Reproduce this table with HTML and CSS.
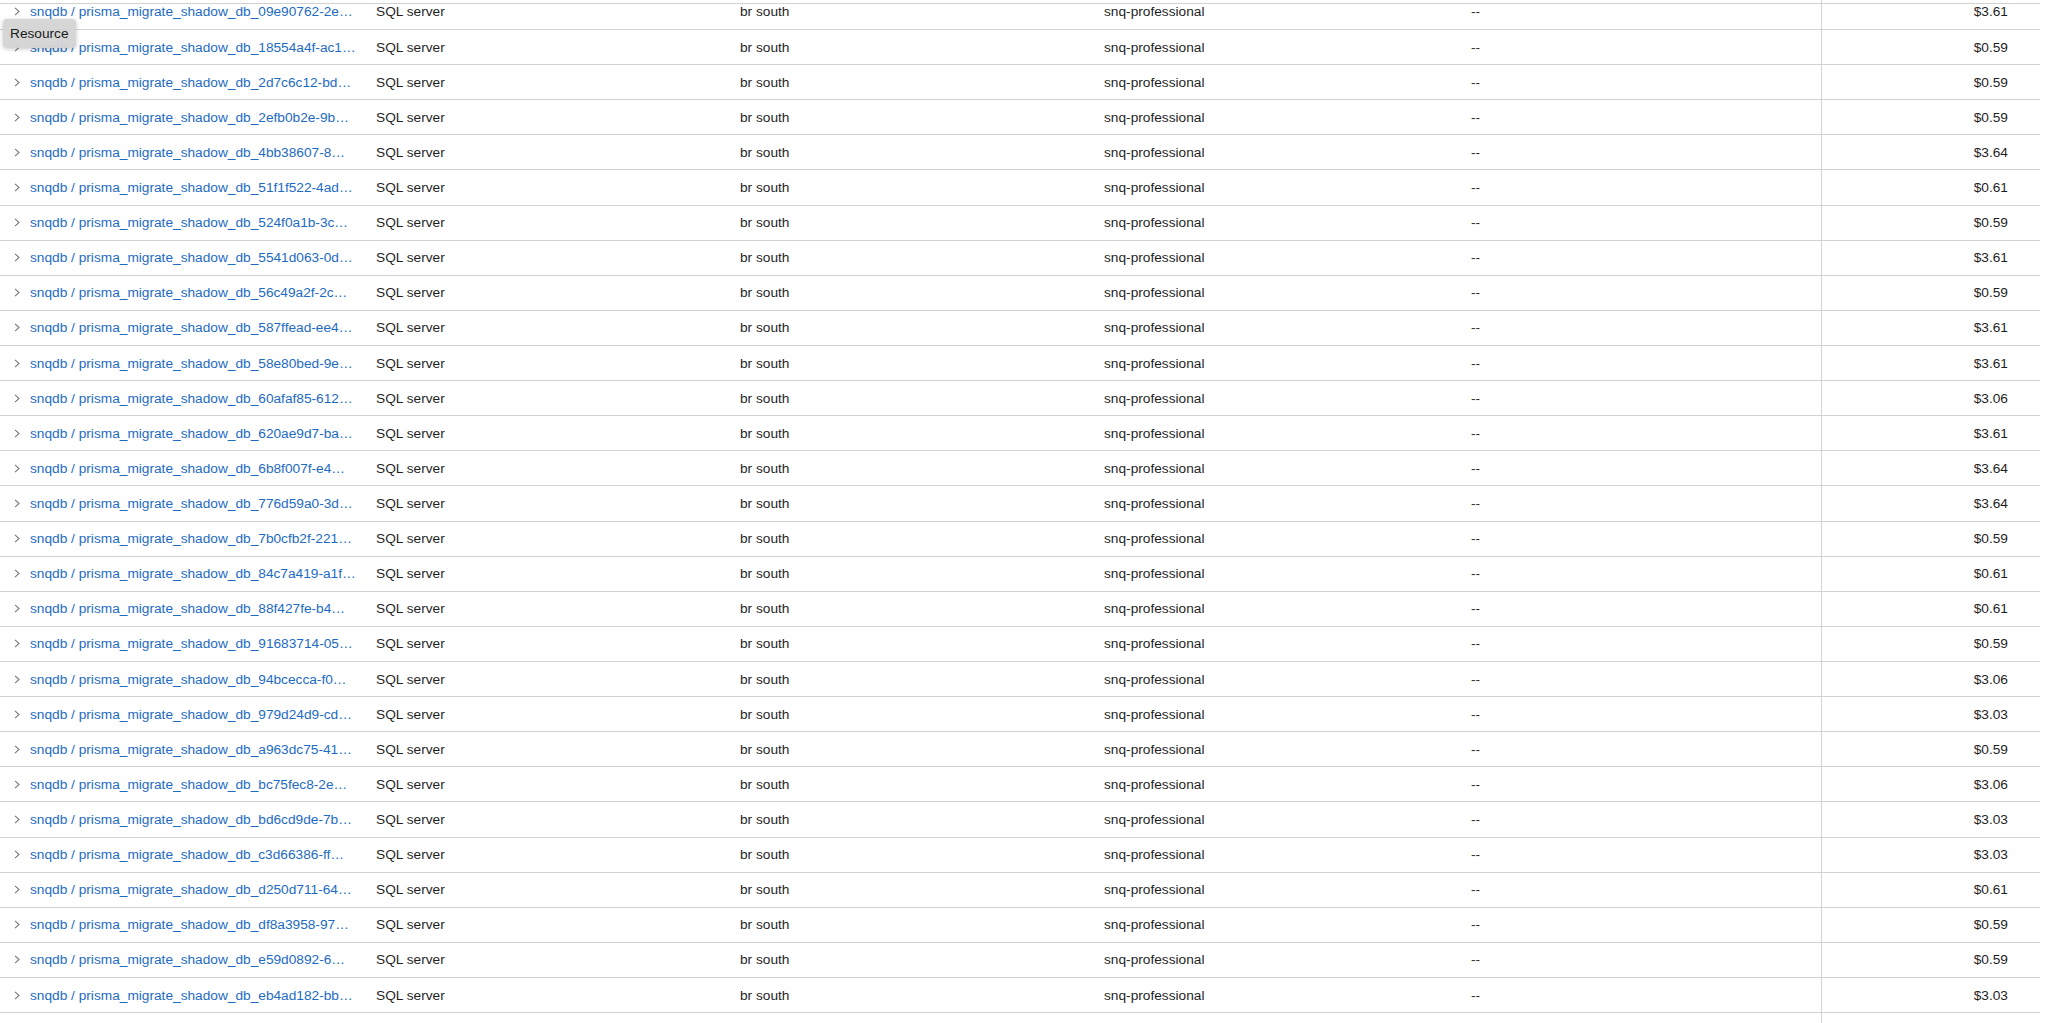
FILE: index.html
```html
<!DOCTYPE html>
<html lang="en">
<head>
<meta charset="utf-8">
<title>Resources</title>
<link rel="stylesheet" href="styles.css">
</head>
<body>
<div class="viewport">
  <div class="sticky-edge"></div>
  <div class="tooltip">Resource</div>
  <div class="table">
    <div class="row"><span class="chev"><svg width="6" height="9" viewBox="0 0 6 9"><path d="M1 0.8 L5 4.5 L1 8.2" fill="none" stroke="#7a7a7a" stroke-width="1.1"/></svg></span><a class="name">snqdb / prisma_migrate_shadow_db_09e90762-2e…</a><span>SQL server</span><span>br south</span><span>snq-professional</span><span class="dash">--</span><span class="price">$3.61</span></div>
    <div class="row"><span class="chev"><svg width="6" height="9" viewBox="0 0 6 9"><path d="M1 0.8 L5 4.5 L1 8.2" fill="none" stroke="#7a7a7a" stroke-width="1.1"/></svg></span><a class="name">snqdb / prisma_migrate_shadow_db_18554a4f-ac1…</a><span>SQL server</span><span>br south</span><span>snq-professional</span><span class="dash">--</span><span class="price">$0.59</span></div>
    <div class="row"><span class="chev"><svg width="6" height="9" viewBox="0 0 6 9"><path d="M1 0.8 L5 4.5 L1 8.2" fill="none" stroke="#7a7a7a" stroke-width="1.1"/></svg></span><a class="name">snqdb / prisma_migrate_shadow_db_2d7c6c12-bd…</a><span>SQL server</span><span>br south</span><span>snq-professional</span><span class="dash">--</span><span class="price">$0.59</span></div>
    <div class="row"><span class="chev"><svg width="6" height="9" viewBox="0 0 6 9"><path d="M1 0.8 L5 4.5 L1 8.2" fill="none" stroke="#7a7a7a" stroke-width="1.1"/></svg></span><a class="name">snqdb / prisma_migrate_shadow_db_2efb0b2e-9b…</a><span>SQL server</span><span>br south</span><span>snq-professional</span><span class="dash">--</span><span class="price">$0.59</span></div>
    <div class="row"><span class="chev"><svg width="6" height="9" viewBox="0 0 6 9"><path d="M1 0.8 L5 4.5 L1 8.2" fill="none" stroke="#7a7a7a" stroke-width="1.1"/></svg></span><a class="name">snqdb / prisma_migrate_shadow_db_4bb38607-8…</a><span>SQL server</span><span>br south</span><span>snq-professional</span><span class="dash">--</span><span class="price">$3.64</span></div>
    <div class="row"><span class="chev"><svg width="6" height="9" viewBox="0 0 6 9"><path d="M1 0.8 L5 4.5 L1 8.2" fill="none" stroke="#7a7a7a" stroke-width="1.1"/></svg></span><a class="name">snqdb / prisma_migrate_shadow_db_51f1f522-4ad…</a><span>SQL server</span><span>br south</span><span>snq-professional</span><span class="dash">--</span><span class="price">$0.61</span></div>
    <div class="row"><span class="chev"><svg width="6" height="9" viewBox="0 0 6 9"><path d="M1 0.8 L5 4.5 L1 8.2" fill="none" stroke="#7a7a7a" stroke-width="1.1"/></svg></span><a class="name">snqdb / prisma_migrate_shadow_db_524f0a1b-3c…</a><span>SQL server</span><span>br south</span><span>snq-professional</span><span class="dash">--</span><span class="price">$0.59</span></div>
    <div class="row"><span class="chev"><svg width="6" height="9" viewBox="0 0 6 9"><path d="M1 0.8 L5 4.5 L1 8.2" fill="none" stroke="#7a7a7a" stroke-width="1.1"/></svg></span><a class="name">snqdb / prisma_migrate_shadow_db_5541d063-0d…</a><span>SQL server</span><span>br south</span><span>snq-professional</span><span class="dash">--</span><span class="price">$3.61</span></div>
    <div class="row"><span class="chev"><svg width="6" height="9" viewBox="0 0 6 9"><path d="M1 0.8 L5 4.5 L1 8.2" fill="none" stroke="#7a7a7a" stroke-width="1.1"/></svg></span><a class="name">snqdb / prisma_migrate_shadow_db_56c49a2f-2c…</a><span>SQL server</span><span>br south</span><span>snq-professional</span><span class="dash">--</span><span class="price">$0.59</span></div>
    <div class="row"><span class="chev"><svg width="6" height="9" viewBox="0 0 6 9"><path d="M1 0.8 L5 4.5 L1 8.2" fill="none" stroke="#7a7a7a" stroke-width="1.1"/></svg></span><a class="name">snqdb / prisma_migrate_shadow_db_587ffead-ee4…</a><span>SQL server</span><span>br south</span><span>snq-professional</span><span class="dash">--</span><span class="price">$3.61</span></div>
    <div class="row"><span class="chev"><svg width="6" height="9" viewBox="0 0 6 9"><path d="M1 0.8 L5 4.5 L1 8.2" fill="none" stroke="#7a7a7a" stroke-width="1.1"/></svg></span><a class="name">snqdb / prisma_migrate_shadow_db_58e80bed-9e…</a><span>SQL server</span><span>br south</span><span>snq-professional</span><span class="dash">--</span><span class="price">$3.61</span></div>
    <div class="row"><span class="chev"><svg width="6" height="9" viewBox="0 0 6 9"><path d="M1 0.8 L5 4.5 L1 8.2" fill="none" stroke="#7a7a7a" stroke-width="1.1"/></svg></span><a class="name">snqdb / prisma_migrate_shadow_db_60afaf85-612…</a><span>SQL server</span><span>br south</span><span>snq-professional</span><span class="dash">--</span><span class="price">$3.06</span></div>
    <div class="row"><span class="chev"><svg width="6" height="9" viewBox="0 0 6 9"><path d="M1 0.8 L5 4.5 L1 8.2" fill="none" stroke="#7a7a7a" stroke-width="1.1"/></svg></span><a class="name">snqdb / prisma_migrate_shadow_db_620ae9d7-ba…</a><span>SQL server</span><span>br south</span><span>snq-professional</span><span class="dash">--</span><span class="price">$3.61</span></div>
    <div class="row"><span class="chev"><svg width="6" height="9" viewBox="0 0 6 9"><path d="M1 0.8 L5 4.5 L1 8.2" fill="none" stroke="#7a7a7a" stroke-width="1.1"/></svg></span><a class="name">snqdb / prisma_migrate_shadow_db_6b8f007f-e4…</a><span>SQL server</span><span>br south</span><span>snq-professional</span><span class="dash">--</span><span class="price">$3.64</span></div>
    <div class="row"><span class="chev"><svg width="6" height="9" viewBox="0 0 6 9"><path d="M1 0.8 L5 4.5 L1 8.2" fill="none" stroke="#7a7a7a" stroke-width="1.1"/></svg></span><a class="name">snqdb / prisma_migrate_shadow_db_776d59a0-3d…</a><span>SQL server</span><span>br south</span><span>snq-professional</span><span class="dash">--</span><span class="price">$3.64</span></div>
    <div class="row"><span class="chev"><svg width="6" height="9" viewBox="0 0 6 9"><path d="M1 0.8 L5 4.5 L1 8.2" fill="none" stroke="#7a7a7a" stroke-width="1.1"/></svg></span><a class="name">snqdb / prisma_migrate_shadow_db_7b0cfb2f-221…</a><span>SQL server</span><span>br south</span><span>snq-professional</span><span class="dash">--</span><span class="price">$0.59</span></div>
    <div class="row"><span class="chev"><svg width="6" height="9" viewBox="0 0 6 9"><path d="M1 0.8 L5 4.5 L1 8.2" fill="none" stroke="#7a7a7a" stroke-width="1.1"/></svg></span><a class="name">snqdb / prisma_migrate_shadow_db_84c7a419-a1f…</a><span>SQL server</span><span>br south</span><span>snq-professional</span><span class="dash">--</span><span class="price">$0.61</span></div>
    <div class="row"><span class="chev"><svg width="6" height="9" viewBox="0 0 6 9"><path d="M1 0.8 L5 4.5 L1 8.2" fill="none" stroke="#7a7a7a" stroke-width="1.1"/></svg></span><a class="name">snqdb / prisma_migrate_shadow_db_88f427fe-b4…</a><span>SQL server</span><span>br south</span><span>snq-professional</span><span class="dash">--</span><span class="price">$0.61</span></div>
    <div class="row"><span class="chev"><svg width="6" height="9" viewBox="0 0 6 9"><path d="M1 0.8 L5 4.5 L1 8.2" fill="none" stroke="#7a7a7a" stroke-width="1.1"/></svg></span><a class="name">snqdb / prisma_migrate_shadow_db_91683714-05…</a><span>SQL server</span><span>br south</span><span>snq-professional</span><span class="dash">--</span><span class="price">$0.59</span></div>
    <div class="row"><span class="chev"><svg width="6" height="9" viewBox="0 0 6 9"><path d="M1 0.8 L5 4.5 L1 8.2" fill="none" stroke="#7a7a7a" stroke-width="1.1"/></svg></span><a class="name">snqdb / prisma_migrate_shadow_db_94bcecca-f0…</a><span>SQL server</span><span>br south</span><span>snq-professional</span><span class="dash">--</span><span class="price">$3.06</span></div>
    <div class="row"><span class="chev"><svg width="6" height="9" viewBox="0 0 6 9"><path d="M1 0.8 L5 4.5 L1 8.2" fill="none" stroke="#7a7a7a" stroke-width="1.1"/></svg></span><a class="name">snqdb / prisma_migrate_shadow_db_979d24d9-cd…</a><span>SQL server</span><span>br south</span><span>snq-professional</span><span class="dash">--</span><span class="price">$3.03</span></div>
    <div class="row"><span class="chev"><svg width="6" height="9" viewBox="0 0 6 9"><path d="M1 0.8 L5 4.5 L1 8.2" fill="none" stroke="#7a7a7a" stroke-width="1.1"/></svg></span><a class="name">snqdb / prisma_migrate_shadow_db_a963dc75-41…</a><span>SQL server</span><span>br south</span><span>snq-professional</span><span class="dash">--</span><span class="price">$0.59</span></div>
    <div class="row"><span class="chev"><svg width="6" height="9" viewBox="0 0 6 9"><path d="M1 0.8 L5 4.5 L1 8.2" fill="none" stroke="#7a7a7a" stroke-width="1.1"/></svg></span><a class="name">snqdb / prisma_migrate_shadow_db_bc75fec8-2e…</a><span>SQL server</span><span>br south</span><span>snq-professional</span><span class="dash">--</span><span class="price">$3.06</span></div>
    <div class="row"><span class="chev"><svg width="6" height="9" viewBox="0 0 6 9"><path d="M1 0.8 L5 4.5 L1 8.2" fill="none" stroke="#7a7a7a" stroke-width="1.1"/></svg></span><a class="name">snqdb / prisma_migrate_shadow_db_bd6cd9de-7b…</a><span>SQL server</span><span>br south</span><span>snq-professional</span><span class="dash">--</span><span class="price">$3.03</span></div>
    <div class="row"><span class="chev"><svg width="6" height="9" viewBox="0 0 6 9"><path d="M1 0.8 L5 4.5 L1 8.2" fill="none" stroke="#7a7a7a" stroke-width="1.1"/></svg></span><a class="name">snqdb / prisma_migrate_shadow_db_c3d66386-ff…</a><span>SQL server</span><span>br south</span><span>snq-professional</span><span class="dash">--</span><span class="price">$3.03</span></div>
    <div class="row"><span class="chev"><svg width="6" height="9" viewBox="0 0 6 9"><path d="M1 0.8 L5 4.5 L1 8.2" fill="none" stroke="#7a7a7a" stroke-width="1.1"/></svg></span><a class="name">snqdb / prisma_migrate_shadow_db_d250d711-64…</a><span>SQL server</span><span>br south</span><span>snq-professional</span><span class="dash">--</span><span class="price">$0.61</span></div>
    <div class="row"><span class="chev"><svg width="6" height="9" viewBox="0 0 6 9"><path d="M1 0.8 L5 4.5 L1 8.2" fill="none" stroke="#7a7a7a" stroke-width="1.1"/></svg></span><a class="name">snqdb / prisma_migrate_shadow_db_df8a3958-97…</a><span>SQL server</span><span>br south</span><span>snq-professional</span><span class="dash">--</span><span class="price">$0.59</span></div>
    <div class="row"><span class="chev"><svg width="6" height="9" viewBox="0 0 6 9"><path d="M1 0.8 L5 4.5 L1 8.2" fill="none" stroke="#7a7a7a" stroke-width="1.1"/></svg></span><a class="name">snqdb / prisma_migrate_shadow_db_e59d0892-6…</a><span>SQL server</span><span>br south</span><span>snq-professional</span><span class="dash">--</span><span class="price">$0.59</span></div>
    <div class="row"><span class="chev"><svg width="6" height="9" viewBox="0 0 6 9"><path d="M1 0.8 L5 4.5 L1 8.2" fill="none" stroke="#7a7a7a" stroke-width="1.1"/></svg></span><a class="name">snqdb / prisma_migrate_shadow_db_eb4ad182-bb…</a><span>SQL server</span><span>br south</span><span>snq-professional</span><span class="dash">--</span><span class="price">$3.03</span></div>
    <div class="row tail"><span></span><span></span><span></span><span></span><span></span><span></span><span class="price"></span></div>
  </div>
</div>
</body>
</html>
```

FILE: styles.css
```css
html, body {
  margin: 0;
  padding: 0;
  background: #ffffff;
}

body {
  font-family: "Liberation Sans", Arial, Helvetica, sans-serif;
  font-size: 13.7px;
  color: #1f1f1f;
  overflow: hidden;
}

.viewport {
  position: relative;
  width: 2048px;
  height: 1023px;
  overflow: hidden;
}

.sticky-edge {
  position: absolute;
  left: 0;
  top: 3px;
  width: 2040px;
  height: 1px;
  background: #d2d2d2;
  z-index: 2;
}

.tooltip {
  position: absolute;
  left: 3px;
  top: 19px;
  height: 29px;
  padding: 0 7px;
  display: flex;
  align-items: center;
  background: rgba(212, 212, 212, 0.95);
  border-radius: 4px;
  box-shadow: 0 1px 4px rgba(0, 0, 0, 0.22);
  font-size: 13.7px;
  color: #1a1a1a;
  z-index: 3;
}

.table {
  width: 2040px;
  margin-top: -5.12px;
  display: flex;
  flex-direction: column;
}

.row {
  display: grid;
  grid-template-columns: 30px 346px 364px 364px 367px 350px 1fr;
  height: 35.12px;
  box-sizing: border-box;
  border-bottom: 1px solid #d2d2d2;
  align-items: center;
}

.row > span,
.row > a {
  white-space: nowrap;
  overflow: hidden;
}

.chev {
  display: flex;
  align-items: center;
  padding-left: 14px;
  height: 100%;
}

.name {
  color: #1e6bc4;
  text-overflow: ellipsis;
  padding-right: 8px;
  cursor: pointer;
}

.dash {
  color: #333;
}

.price {
  height: 100%;
  display: flex;
  align-items: center;
  justify-content: flex-end;
  padding-right: 32px;
  border-left: 1px solid #cfd5dc;
}

.row.tail {
  height: 12px;
  border-bottom: none;
}
```
